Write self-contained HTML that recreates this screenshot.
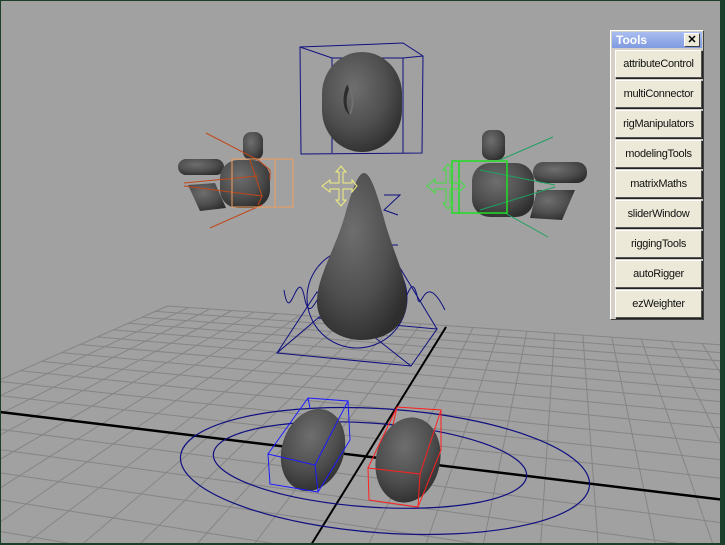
<!DOCTYPE html>
<html><head><meta charset="utf-8"><style>
html,body{margin:0;padding:0;width:725px;height:545px;overflow:hidden;background:#a1a1a1;}
#vp{position:absolute;left:0;top:0;width:725px;height:545px;box-sizing:border-box;border-top:1px solid #1d3d2b;border-left:1px solid #1d3d2b;border-right:5px solid #1d3d2b;border-bottom:2px solid #1d3d2b;}
svg{position:absolute;left:0;top:0;overflow:hidden}
#panel{position:absolute;left:610px;top:30px;width:94px;height:290px;background:#d4d0c8;box-sizing:border-box;border:1px solid;border-color:#fff #404040 #404040 #fff;font-family:"Liberation Sans",sans-serif;}
#title{position:absolute;left:1px;top:1px;right:1px;height:16px;background:linear-gradient(#a9bdf0,#7f9ae0);color:#fff;font-weight:bold;font-size:12px;line-height:16px;padding-left:4px;}
#x{position:absolute;right:2px;top:1px;width:14px;height:12px;background:#ece9d8;border:1px solid;border-color:#fff #404040 #404040 #fff;font-size:11px;line-height:12px;text-align:center;color:#000;font-weight:bold}
.b{position:absolute;left:4px;width:87px;height:28px;box-sizing:border-box;background:#ece9d8;border:1px solid;border-color:#fff #555 #555 #fff;box-shadow:1px 1px 0 #222;font-size:11px;letter-spacing:-0.3px;text-align:center;line-height:26px;color:#111;}
</style></head><body>
<svg id="s" width="725" height="545" viewBox="0 0 725 545">
<defs>
<radialGradient id="g" cx="0.4" cy="0.35" r="0.7">
<stop offset="0" stop-color="#6e6e6e"/><stop offset="0.6" stop-color="#4e4e4e"/><stop offset="1" stop-color="#2e2e2e"/>
</radialGradient>
</defs>
<g id="grid" stroke="#858585" stroke-width="1"></g>
<line x1="0" y1="412" x2="725" y2="500" stroke="#000" stroke-width="2.5"/>
<line x1="446" y1="327" x2="311" y2="545" stroke="#000" stroke-width="2"/>
<ellipse cx="385" cy="471" rx="205" ry="62" fill="none" stroke="#101080" stroke-width="1.2" transform="rotate(4 385 471)"/>
<ellipse cx="370" cy="465" rx="157" ry="42" fill="none" stroke="#101080" stroke-width="1.2" transform="rotate(4 370 465)"/>
<ellipse cx="313" cy="450" rx="31" ry="42" fill="url(#g)" transform="rotate(18 313 450)"/>
<ellipse cx="408" cy="460" rx="32" ry="43" fill="url(#g)" transform="rotate(12 408 460)"/>
<g fill="none" stroke="#1a1aff" stroke-width="1">
<path d="M268 454 L315 465 L318 492 L270 484 Z M268 454 L308 398 L348 401 L315 465 M348 401 L350 440 L318 492 M308 398 L310 408"/>
</g>
<g fill="none" stroke="#ff2020" stroke-width="1">
<path d="M368 468 L420 474 L418 507 L369 500 Z M368 468 L397 407 L441 410 L420 474 M441 410 L441 450 L418 507 M397 407 L393 425"/>
</g>
<g fill="none" stroke="#101080" stroke-width="1">
<path d="M277 353 L411 366 L437 329 L318 318 Z M277 353 L317 292 L411 366 M318 318 L400 268 L437 329"/>
<circle cx="357" cy="298" r="50"/>
<path d="M284 290 C290 330 298 260 305 300 C312 330 322 270 330 300 C340 320 350 270 360 300 C370 320 385 270 395 300 C405 325 410 260 418 300 C422 310 425 270 445 310"/>
<path d="M384 195 L400 195 L384 210 L398 215 M384 245 L398 245 M384 262 L398 262"/>
</g>
<path d="M364 173 C358 173 352 190 345 215 C335 250 318 275 317 300 C316 325 338 340 362 340 C387 340 408 325 407 298 C406 275 392 250 383 215 C376 190 370 173 364 173 Z" fill="url(#g)"/>
<g fill="none" stroke="#101080" stroke-width="1">
<path d="M300 47 L403 43 L423 56 L422 153 L301 154 Z M300 47 L332 58 L403 58 L423 56 M332 58 L332 153 M403 58 L403 153"/>
</g>
<rect x="322" y="52" width="80" height="100" rx="40" ry="42" fill="url(#g)"/>
<path d="M347 85 C342 95 342 110 350 115 C345 105 346 95 350 87 Z" fill="#2c2c2c"/>
<path d="M349 86 C353 95 354 105 350 114" stroke="#707070" fill="none" stroke-width="2"/>
<rect x="178" y="159" width="46" height="16" rx="8" fill="url(#g)"/>
<path d="M188 185 L215 183 L226 208 L200 211 Z" fill="url(#g)"/>
<rect x="243" y="132" width="20" height="28" rx="8" fill="url(#g)"/>
<rect x="220" y="160" width="50" height="48" rx="18" fill="url(#g)"/>
<g fill="none" stroke="#c0481a" stroke-width="1">
<path d="M206 133 L258 160 L270 170 L270 180 M184 183 L258 176 M184 186 L262 196 L258 205 M210 228 L262 205 M250 160 L262 196"/>
</g>
<g fill="none" stroke="#f0a060" stroke-width="1">
<path d="M232 159 L293 159 L293 207 L232 207 Z M275 159 L275 207"/>
</g>
<rect x="482" y="130" width="23" height="30" rx="8" fill="url(#g)"/>
<rect x="533" y="162" width="54" height="21" rx="10" fill="url(#g)"/>
<path d="M537 190 L575 190 L562 220 L530 218 Z" fill="url(#g)"/>
<rect x="472" y="163" width="62" height="54" rx="18" fill="url(#g)"/>
<g fill="none" stroke="#20a060" stroke-width="1">
<path d="M553 137 L500 160 M548 237 L505 213 M480 170 L555 185 M480 210 L555 187"/>
</g>
<g fill="none" stroke="#22dd22" stroke-width="1.5">
<path d="M452 161 L507 161 L507 213 L452 213 Z M459 161 L459 213"/>
</g>
<g fill="none" stroke="#f0f080" stroke-width="1">
<path d="M336 172 L341 166 L346 172 L343 172 L343 183 L352 183 L352 180 L357 186 L352 192 L352 189 L343 189 L343 200 L346 200 L341 206 L336 200 L339 200 L339 189 L330 189 L330 192 L322 186 L330 180 L330 183 L339 183 L339 172 Z"/>
</g>
<g fill="none" stroke="#40e040" stroke-width="1">
<path d="M443 170 L448 164 L453 170 L450 170 L450 183 L459 183 L459 180 L465 186 L459 192 L459 189 L450 189 L450 203 L453 203 L448 209 L443 203 L446 203 L446 189 L435 189 L435 193 L427 186 L435 179 L435 183 L446 183 L446 170 Z"/>
</g>
</svg>
<div id="vp"></div>
<div id="panel">
<div id="title">Tools<div id="x">✕</div></div>
<div class="b" style="top:19px">attributeControl</div>
<div class="b" style="top:49px">multiConnector</div>
<div class="b" style="top:79px">rigManipulators</div>
<div class="b" style="top:109px">modelingTools</div>
<div class="b" style="top:139px">matrixMaths</div>
<div class="b" style="top:169px">sliderWindow</div>
<div class="b" style="top:199px">riggingTools</div>
<div class="b" style="top:229px">autoRigger</div>
<div class="b" style="top:259px">ezWeighter</div>
</div>
<script>
(function(){
var N=12,p=0.19,q=0.667,VX=[-2282,134],VZ=[568,130],O=[366,456];
function P(u,v){var a=p*u/N,b=q*v/N,w=a+b+1;return[(a*VX[0]+b*VZ[0]+O[0])/w,(a*VX[1]+b*VZ[1]+O[1])/w];}
var g=document.getElementById('grid'),h='';
for(var i=-N;i<=N;i++){
 var a=P(i,-N),b=P(i,N);h+='<line x1="'+a[0].toFixed(1)+'" y1="'+a[1].toFixed(1)+'" x2="'+b[0].toFixed(1)+'" y2="'+b[1].toFixed(1)+'"/>';
 a=P(-N,i);b=P(N,i);h+='<line x1="'+a[0].toFixed(1)+'" y1="'+a[1].toFixed(1)+'" x2="'+b[0].toFixed(1)+'" y2="'+b[1].toFixed(1)+'"/>';
}
g.innerHTML=h;
})();
</script>
</body></html>
